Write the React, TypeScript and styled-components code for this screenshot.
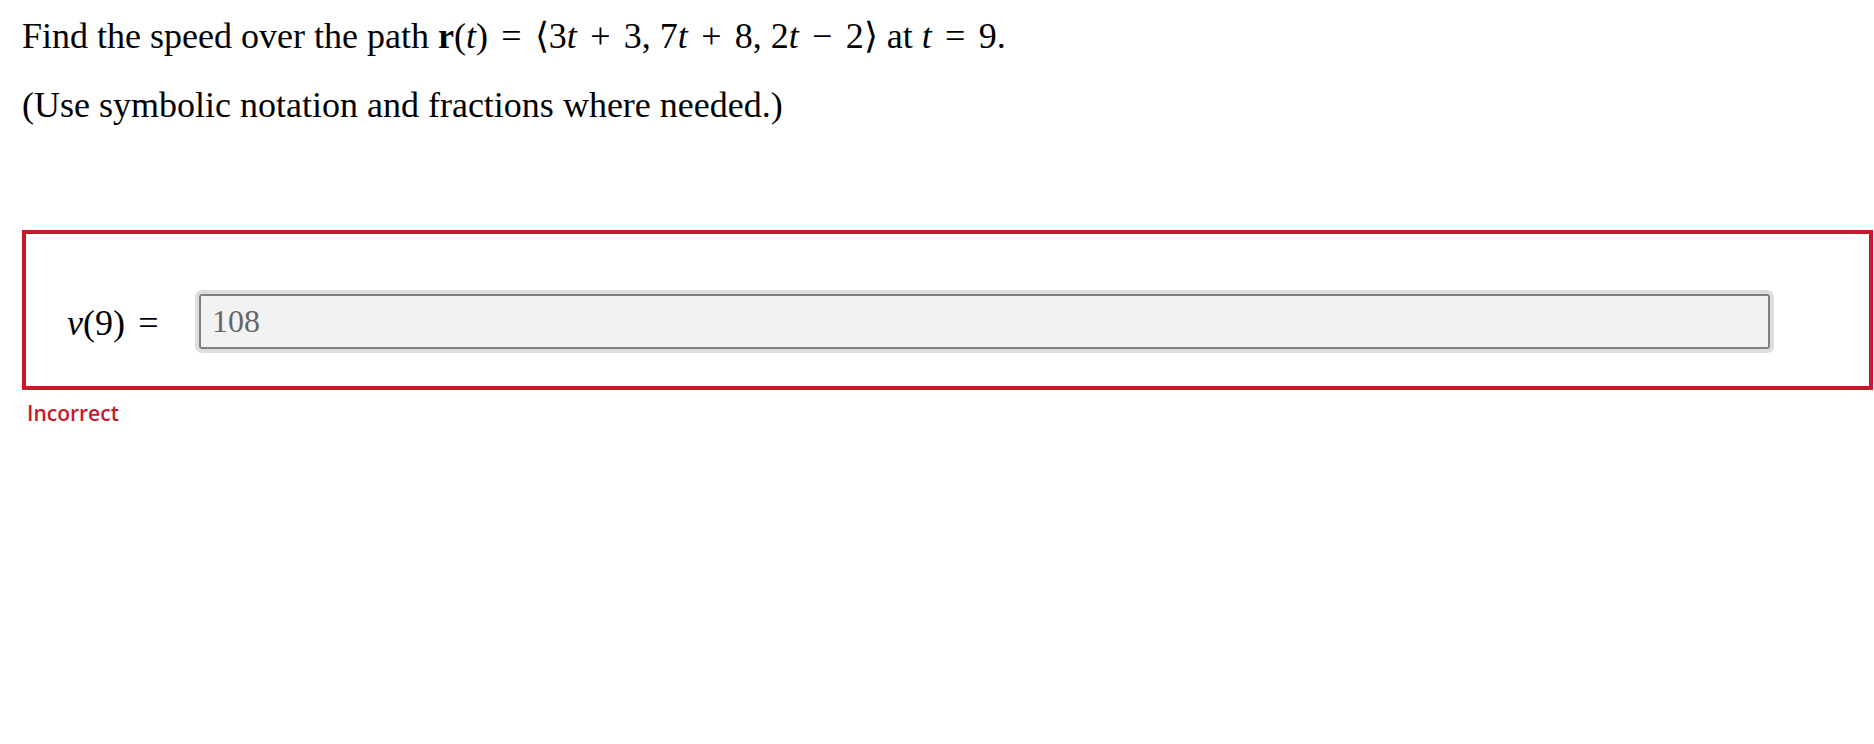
import React from "react";
import styled, { createGlobalStyle } from "styled-components";

const GlobalStyle = createGlobalStyle`
  html, body {
    margin: 0;
    padding: 0;
    background: #ffffff;
  }
  body {
    font-family: "Liberation Serif", "Times New Roman", serif;
    color: #000000;
  }
`;

const Page = styled.div`
  padding: 14px 1px 0 22px;
`;

const Prompt = styled.p`
  margin: 0;
  font-size: 36px;
  line-height: 44px;
  white-space: nowrap;
`;

const Note = styled(Prompt)`
  margin-top: 25px;
`;

const MathVar = styled.i`
  font-style: italic;
`;

const Bold = styled.b`
  font-weight: 700;
`;

// operator with MathJax-like spacing around it
const Op = styled.span`
  padding: 0 0.37em;
`;

const AnswerBox = styled.div`
  margin-top: 103px;
  border: 4px solid #c8192c;
  padding: 56px 95px 33px 41px;
  display: flex;
  align-items: center;
  gap: 23px;
`;

const Label = styled.span`
  font-size: 36px;
  white-space: nowrap;
  padding-top: 2px;
`;

const InputRing = styled.div`
  flex: 1;
  border: 4px solid #dddddd;
  border-radius: 7px;
  display: flex;
`;

const AnswerInput = styled.input`
  flex: 1;
  height: 55px;
  box-sizing: border-box;
  border: 2px solid #7f7f7f;
  border-radius: 3px;
  background: #f2f2f2;
  font-family: "Liberation Serif", "Times New Roman", serif;
  font-size: 32px;
  color: #666666;
  padding: 0 11px;
  outline: none;
`;

const Feedback = styled.div`
  margin-top: 9px;
  margin-left: 5px;
  font-family: "Open Sans", "Liberation Sans", sans-serif;
  font-weight: 600;
  font-size: 21px;
  color: #c8192c;
`;

export default function App() {
  return (
    <>
      <GlobalStyle />
      <Page>
        <Prompt>
          Find the speed over the path <Bold>r</Bold>(<MathVar>t</MathVar>)
          <Op>=</Op>⟨3<MathVar>t</MathVar>
          <Op>+</Op>3, 7<MathVar>t</MathVar>
          <Op>+</Op>8, 2<MathVar>t</MathVar>
          <Op>−</Op>2⟩ at <MathVar>t</MathVar>
          <Op>=</Op>9.
        </Prompt>
        <Note>(Use symbolic notation and fractions where needed.)</Note>
        <AnswerBox>
          <Label>
            <MathVar>v</MathVar>(9)<Op>=</Op>
          </Label>
          <InputRing>
            <AnswerInput defaultValue="108" readOnly />
          </InputRing>
        </AnswerBox>
        <Feedback>Incorrect</Feedback>
      </Page>
    </>
  );
}
